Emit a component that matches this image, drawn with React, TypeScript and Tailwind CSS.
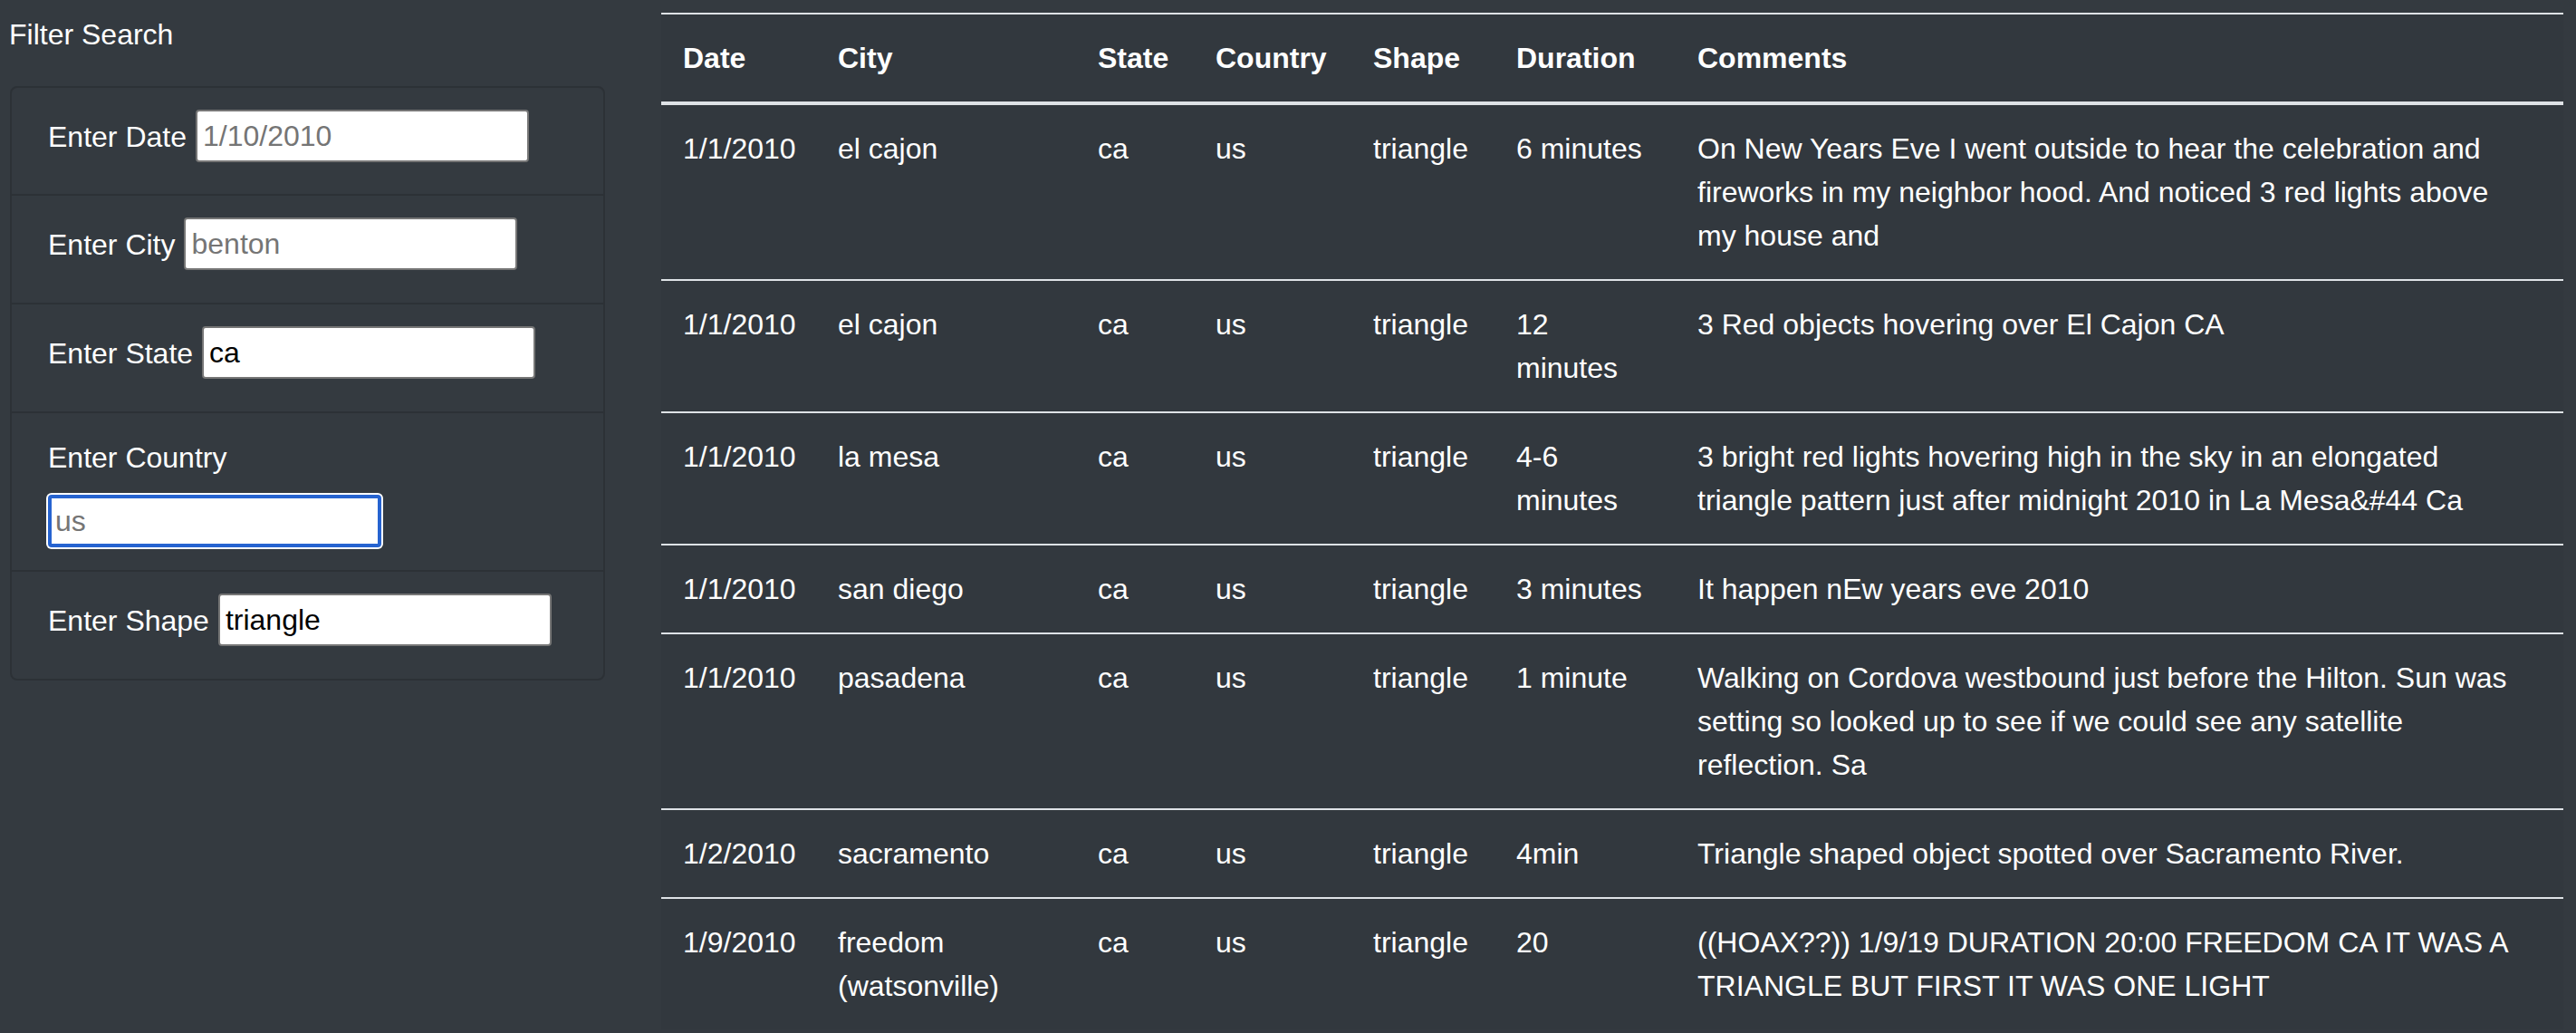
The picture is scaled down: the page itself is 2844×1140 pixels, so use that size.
import React from 'react';

interface Sighting {
  datetime: string;
  city: string;
  state: string;
  country: string;
  shape: string;
  duration: string;
  comments: string;
}

const SIGHTINGS: Sighting[] = [
  {
    datetime: '1/1/2010',
    city: 'el cajon',
    state: 'ca',
    country: 'us',
    shape: 'triangle',
    duration: '6 minutes',
    comments:
      'On New Years Eve I went outside to hear the celebration and fireworks in my neighbor hood. And noticed 3 red lights above my house and',
  },
  {
    datetime: '1/1/2010',
    city: 'el cajon',
    state: 'ca',
    country: 'us',
    shape: 'triangle',
    duration: '12 minutes',
    comments: '3 Red objects hovering over El Cajon CA',
  },
  {
    datetime: '1/1/2010',
    city: 'la mesa',
    state: 'ca',
    country: 'us',
    shape: 'triangle',
    duration: '4-6 minutes',
    comments:
      '3 bright red lights hovering high in the sky in an elongated triangle pattern just after midnight 2010 in La Mesa&#44 Ca',
  },
  {
    datetime: '1/1/2010',
    city: 'san diego',
    state: 'ca',
    country: 'us',
    shape: 'triangle',
    duration: '3 minutes',
    comments: 'It happen nEw years eve 2010',
  },
  {
    datetime: '1/1/2010',
    city: 'pasadena',
    state: 'ca',
    country: 'us',
    shape: 'triangle',
    duration: '1 minute',
    comments:
      'Walking on Cordova westbound just before the Hilton. Sun was setting so looked up to see if we could see any satellite reflection. Sa',
  },
  {
    datetime: '1/2/2010',
    city: 'sacramento',
    state: 'ca',
    country: 'us',
    shape: 'triangle',
    duration: '4min',
    comments: 'Triangle shaped object spotted over Sacramento River.',
  },
  {
    datetime: '1/9/2010',
    city: 'freedom (watsonville)',
    state: 'ca',
    country: 'us',
    shape: 'triangle',
    duration: '20',
    comments: '((HOAX??)) 1/9/19 DURATION 20:00 FREEDOM CA IT WAS A TRIANGLE BUT FIRST IT WAS ONE LIGHT',
  },
];

const inputBase =
  'w-[368px] h-[58px] rounded-[4px] bg-white text-black text-[32px] leading-[48px] placeholder:text-[#757575] outline-none';

function FilterRow({
  label,
  placeholder,
  value,
  first,
}: {
  label: string;
  placeholder?: string;
  value?: string;
  first?: boolean;
}) {
  return (
    <li className={`px-[40px] pt-[24px] ${first ? 'pb-[35px]' : 'pb-[36px] border-t-2 border-[#2c3136]'}`}>
      <div className="flex items-center gap-[10px] h-[58px]">
        <label className="pt-[2px]">{label}</label>
        <input
          type="text"
          placeholder={placeholder}
          defaultValue={value}
          className={`${inputBase} border-2 border-[#767676] px-[6px]`}
        />
      </div>
    </li>
  );
}

export default function App() {
  return (
    <div className="min-h-screen bg-[#343a40] text-white font-['Liberation_Sans',Arial,sans-serif] text-[32px] leading-[48px]">
      <div className="flex">
        {/* filters */}
        <aside className="w-[730px] shrink-0 pt-[14px] pl-[10px]">
          <p>Filter Search</p>
          <ul className="mt-[33px] ml-[1px] w-[657px] border-2 border-[#2c3136] rounded-[8px]">
            <FilterRow label="Enter Date" placeholder="1/10/2010" first />
            <FilterRow label="Enter City" placeholder="benton" />
            <FilterRow label="Enter State" value="ca" />
            <li className="px-[40px] pt-[25px] pb-[25px] border-t-2 border-[#2c3136]">
              <label className="block">Enter Country</label>
              <input
                type="text"
                placeholder="us"
                className={`${inputBase} mt-[17px] block border-[4px] border-[#2663d0] px-[4px] ring-2 ring-white`}
              />
            </li>
            <FilterRow label="Enter Shape" value="triangle" />
          </ul>
        </aside>

        {/* results */}
        <div className="pt-[14px]">
          <table className="w-[2100px] table-fixed border-separate border-spacing-0 bg-[#32383e] text-left">
            <colgroup>
              <col className="w-[171px]" />
              <col className="w-[287px]" />
              <col className="w-[130px]" />
              <col className="w-[174px]" />
              <col className="w-[158px]" />
              <col className="w-[200px]" />
              <col />
            </colgroup>
            <thead>
              <tr>
                {['Date', 'City', 'State', 'Country', 'Shape', 'Duration', 'Comments'].map((h) => (
                  <th
                    key={h}
                    className="p-[24px] font-bold align-bottom border-t-2 border-b-4 border-[#dee2e6]"
                  >
                    {h}
                  </th>
                ))}
              </tr>
            </thead>
            <tbody>
              {SIGHTINGS.map((s, i) => {
                const cell = `p-[24px] align-top border-[#dee2e6] ${i === 0 ? '' : 'border-t-2'}`;
                return (
                  <tr key={i}>
                    <td className={cell}>{s.datetime}</td>
                    <td className={cell}>{s.city}</td>
                    <td className={cell}>{s.state}</td>
                    <td className={cell}>{s.country}</td>
                    <td className={cell}>{s.shape}</td>
                    <td className={cell}>{s.duration}</td>
                    <td className={`${cell} pr-[60px]`}>{s.comments}</td>
                  </tr>
                );
              })}
            </tbody>
          </table>
        </div>
      </div>
    </div>
  );
}
